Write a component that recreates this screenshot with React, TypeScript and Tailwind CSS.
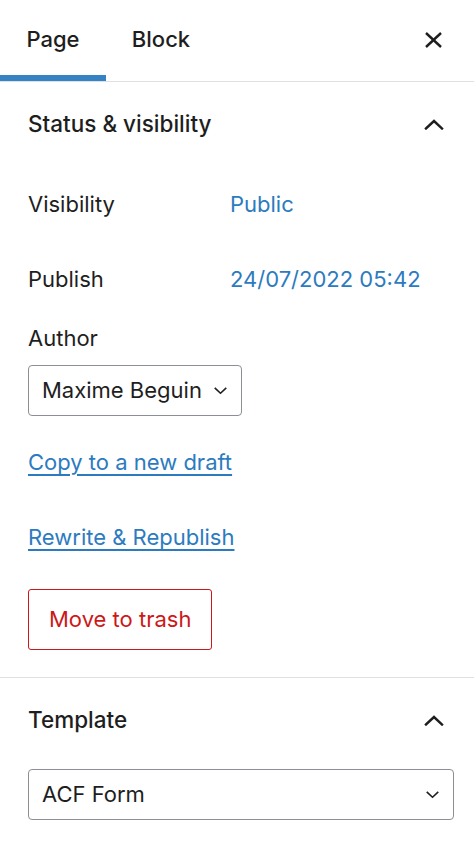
function Chevron({ up, className }: { up?: boolean; className?: string }) {
  return (
    <svg viewBox="0 0 20 11" className={className} fill="none" stroke="currentColor" strokeWidth={2.4} strokeLinecap="square">
      {up ? <polyline points="2,9.5 10,2 18,9.5" /> : <polyline points="2,1.5 10,9 18,1.5" />}
    </svg>
  );
}

function Select({ value, wide }: { value: string; wide?: boolean }) {
  return (
    <div
      className={`flex items-center justify-between h-[51px] border border-[#8c8f94] rounded-[4px] pl-[13px] pr-[14px] text-[22px] text-[#1e1e1e] ${
        wide ? 'w-[426px]' : 'w-[214px]'
      }`}
    >
      <span>{value}</span>
      <Chevron className="w-[13px] h-[8px]" />
    </div>
  );
}

export default function App() {
  return (
    <div className="w-[474px] h-[861px] bg-white overflow-hidden text-[#1e1e1e] font-['Inter','Liberation_Sans',sans-serif]">
      <div className="flex h-[82px] border-b border-[#e0e0e0]">
        <div className="relative w-[106px] flex items-center justify-center text-[22px] font-medium pb-[2px]">
          Page
          <span className="absolute left-0 right-0 bottom-0 h-[6px] bg-[#3582c4]" />
        </div>
        <div className="w-[110px] flex items-center justify-center text-[22px] font-medium pb-[2px]">
          Block
        </div>
        <div className="flex-1 flex items-center justify-end pr-[32px] pb-[2px]">
          <svg viewBox="0 0 17 16" className="w-[17px] h-[16px]" fill="none" stroke="currentColor" strokeWidth={2.4}>
            <line x1="1" y1="1" x2="16" y2="15" />
            <line x1="16" y1="1" x2="1" y2="15" />
          </svg>
        </div>
      </div>

      <div className="px-[28px] border-b border-[#e0e0e0]">
        <div className="flex items-center justify-between h-[84px]">
          <span className="text-[22.5px] font-medium">Status &amp; visibility</span>
          <Chevron up className="w-[20px] h-[11px] mr-[2px]" />
        </div>
        <div className="flex items-center h-[76px] text-[22px]">
          <span className="w-[202px]">Visibility</span>
          <span className="text-[#2c7bc0]">Public</span>
        </div>
        <div className="flex items-center h-[75px] text-[22px]">
          <span className="w-[202px]">Publish</span>
          <span className="text-[#2c7bc0]">24/07/2022 05:42</span>
        </div>
        <div className="pt-[8px] text-[22px] leading-[26px]">Author</div>
        <div className="mt-[14px]">
          <Select value="Maxime Beguin" />
        </div>
        <div className="mt-[33px] text-[22px] leading-[26px] text-[#2c7bc0] underline underline-offset-[4px]">
          Copy to a new draft
        </div>
        <div className="mt-[49px] text-[22px] leading-[26px] text-[#2c7bc0] underline underline-offset-[4px]">
          Rewrite &amp; Republish
        </div>
        <div className="mt-[39px] pb-[27px]">
          <div className="inline-flex items-center h-[61px] px-[20px] border border-[#cc1818] rounded-[3px] text-[22px] text-[#cc1818]">
            Move to trash
          </div>
        </div>
      </div>

      <div className="px-[28px]">
        <div className="flex items-center justify-between h-[84px]">
          <span className="text-[22.5px] font-medium">Template</span>
          <Chevron up className="w-[20px] h-[11px] mr-[2px]" />
        </div>
        <div className="mt-[7px]">
          <Select value="ACF Form" wide />
        </div>
      </div>
    </div>
  );
}
